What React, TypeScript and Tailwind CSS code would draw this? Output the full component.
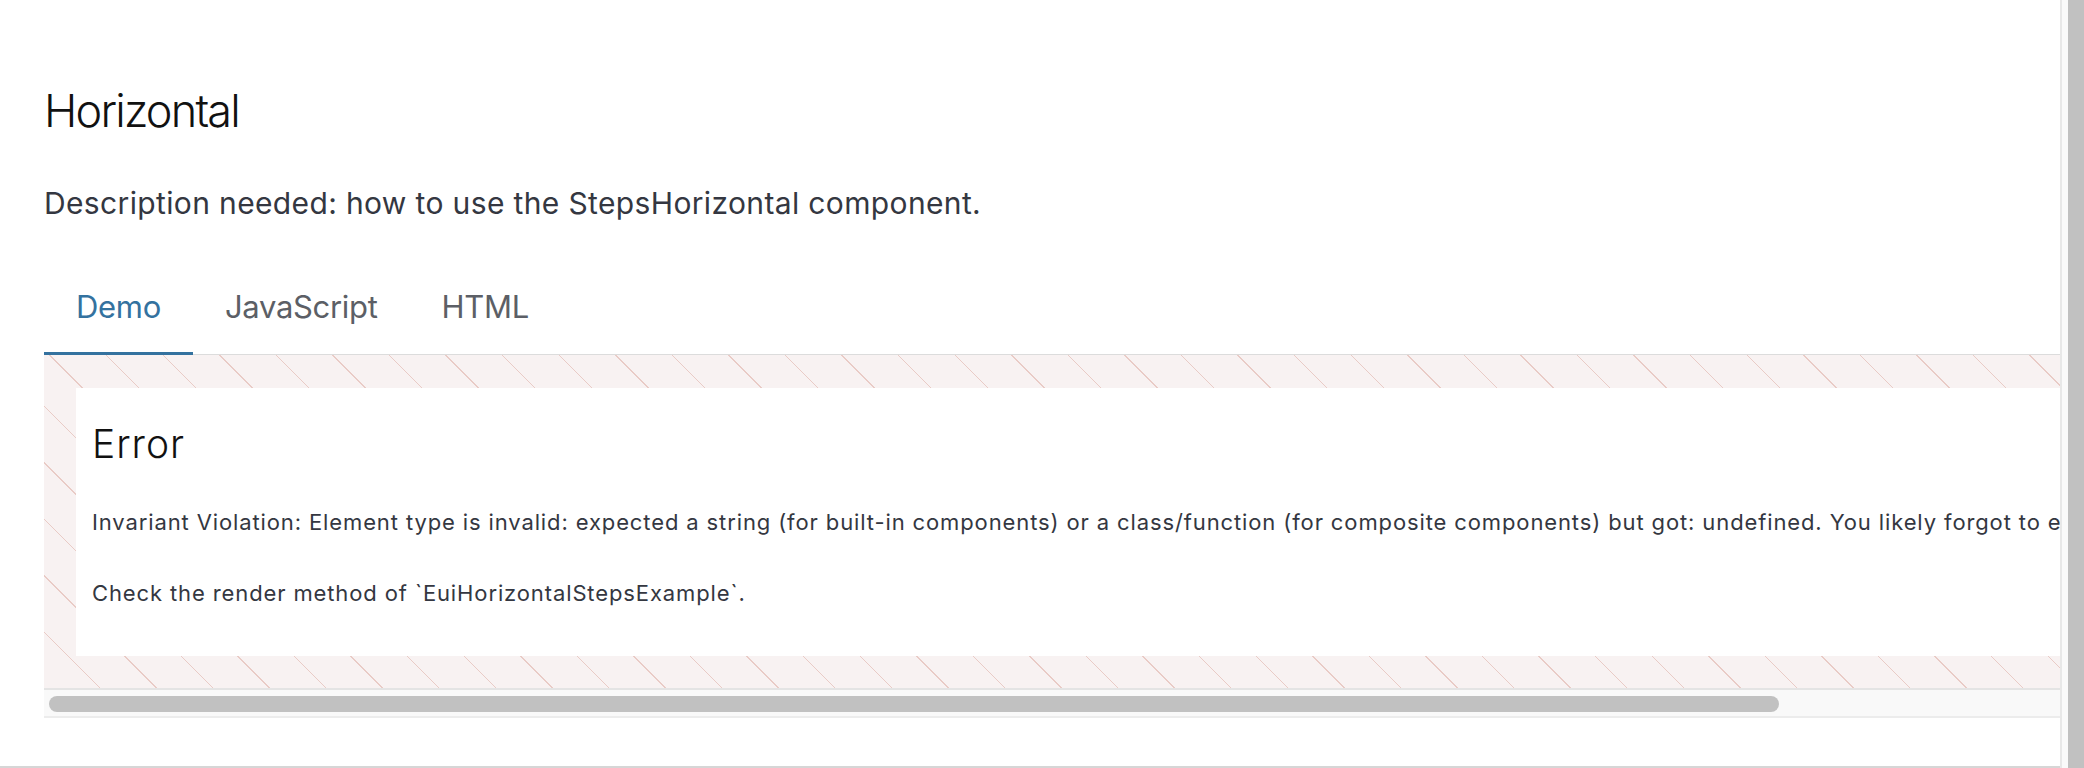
const tabs = ["Demo", "JavaScript", "HTML"];

const hatch =
  "bg-[repeating-linear-gradient(45deg,#f8f2f2_0px,#f8f2f2_39px,#e9cbc6_39px,#e9cbc6_40px)]";

export default function App() {
  return (
    <div className="flex h-[768px] w-full overflow-hidden bg-white font-['Inter','Liberation_Sans',sans-serif]">
      <main className="flex min-w-0 flex-1 flex-col border-b-2 border-[#d6d6d6]">
        <div className="pl-[44px] pt-[84px]">
          <h1 className="text-[45px] font-light leading-[54px] tracking-[-0.04em] text-[#111]">
            Horizontal
          </h1>
          <p className="mt-[45px] text-[30px] leading-[40px] tracking-[0.012em] text-[#343741]">
            Description needed: how to use the StepsHorizontal component.
          </p>

          <div className="mt-[64px] flex border-b border-[#dcdcdc]">
            {tabs.map((t, i) => (
              <button
                key={t}
                className={
                  i === 0
                    ? "-mb-px border-b-[3px] border-[#34729f] px-[32px] pb-[25px] text-[31px] leading-[40px] tracking-[-0.01em] text-[#34729f]"
                    : "-mb-px border-b-[3px] border-transparent px-[32px] pb-[25px] text-[31px] leading-[40px] tracking-[-0.01em] text-[#5c5f66]"
                }
              >
                {t}
              </button>
            ))}
          </div>

          {/* demo area, scrolls sideways */}
          <div className={`overflow-hidden ${hatch}`}>
            <div className="flex w-max px-[32px] pt-[33px] pb-[32px]">
              <div className="whitespace-nowrap bg-white px-[16px] pt-[33px] pb-[47px]">
                <h2 className="text-[39px] font-light leading-[46px] tracking-[0.025em] text-[#111]">
                  Error
                </h2>
                <p className="mt-[39px] text-[22px] leading-[32px] tracking-[0.04em] text-[#343741]">
                  Invariant Violation: Element type is invalid: expected a string (for built-in components) or a
                  class/function (for composite components) but got: undefined. You likely forgot to export your
                  component from the file it's defined in, or you might have mixed up default and named imports.
                </p>
                <p className="mt-[39px] text-[22px] leading-[32px] tracking-[0.04em] text-[#343741]">
                  Check the render method of `EuiHorizontalStepsExample`.
                </p>
              </div>
            </div>
          </div>
          <div className="h-[30px] border-y-2 border-t-[#e4e4e4] border-b-[#ececec] bg-[#f9f9f9] pt-[6px]">
            <div className="ml-[5px] h-[16px] w-[1730px] rounded-full bg-[#c1c1c1]" />
          </div>
        </div>
      </main>

      {/* page scrollbar */}
      <div className="flex w-[24px] shrink-0 justify-end border-l-2 border-[#e8e8e8] bg-[#fafafa]">
        <div className="h-full w-[16px] bg-[#c1c1c1]" />
      </div>
    </div>
  );
}
